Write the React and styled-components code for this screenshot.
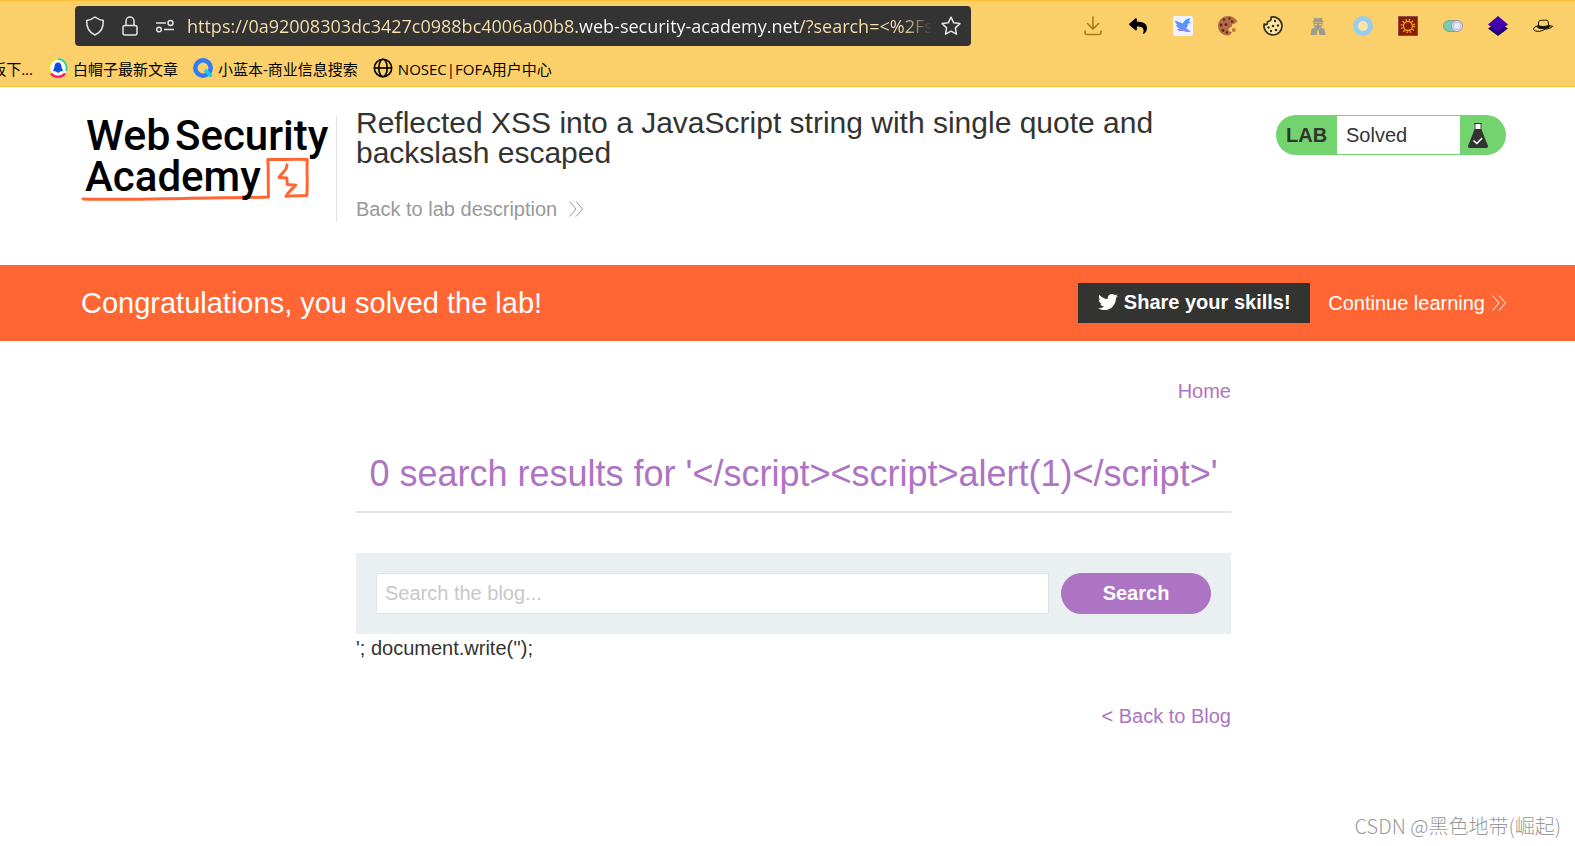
import React, { useState } from 'react';
import styled, { createGlobalStyle } from 'styled-components';
import { FaTwitter, FaReply } from 'react-icons/fa';

const colour = {
  toolbar: '#fbd06a',
  toolbarEdge: '#fdbe33',
  urlBar: '#333333',
  text: '#333332',
  orange: '#ff6633',
  purple: '#ad74c3',
  green: '#72d36f',
  panel: '#eaeff2',
  line: '#e4e4e4',
};

const GlobalStyle = createGlobalStyle`
  * {
    box-sizing: border-box;
  }
  body {
    margin: 0;
    background: #fff;
    color: ${colour.text};
    font-family: "Liberation Sans", Arial, sans-serif;
    font-size: 20px;
  }
  a {
    text-decoration: none;
  }
`;

const Page = styled.div`
  position: relative;
  min-height: 100vh;
  overflow: hidden;
`;

const Browser = styled.div`
  height: 87px;
  background: ${colour.toolbar};
  border-top: 1px solid ${colour.toolbarEdge};
  border-bottom: 1px solid ${colour.toolbarEdge};
  font-family: "Open Sans", "Noto Sans CJK SC", sans-serif;
`;

const Toolbar = styled.div`
  display: flex;
  align-items: center;
  padding: 5px 10px 0 75px;
`;

const UrlBar = styled.div`
  display: flex;
  flex: 1;
  align-items: center;
  gap: 15px;
  height: 40px;
  margin-right: 99px;
  padding: 0 10px;
  background: ${colour.urlBar};
  border-radius: 4px;
  color: #e4e4e4;

  svg {
    flex: none;
  }
`;

/* host name is white, the rest of the address is cream and fades out */
const UrlInput = styled.input`
  flex: 1;
  min-width: 0;
  height: 32px;
  margin: 0 -9px 0 -3px;
  padding: 0;
  border: 0;
  outline: 0;
  font: 18px "Open Sans", sans-serif;
  color: transparent;
  background: linear-gradient(
    90deg,
    #fbe3ae 0 390px,
    #ffffff 390px 612px,
    #fbe3ae 612px 715px,
    transparent 745px
  );
  background-clip: text;
`;

const Extensions = styled.div`
  display: flex;
`;

const ExtensionButton = styled.button`
  display: flex;
  align-items: center;
  justify-content: center;
  width: 45px;
  height: 40px;
  padding: 0;
  border: 0;
  background: none;
  color: #000;
`;

const Bookmarks = styled.nav`
  display: flex;
  gap: 15px;
  height: 44px;
  align-items: center;
`;

const Bookmark = styled.a`
  display: flex;
  align-items: center;
  gap: 5px;
  color: #000;
  font-size: 15px;
  white-space: nowrap;
`;

const CutBookmark = styled(Bookmark)`
  justify-content: flex-end;
  width: 33px;
  overflow: hidden;
`;

const Header = styled.header`
  display: flex;
  align-items: flex-start;
  height: 178px;
  padding: 21px 69px 0 81px;
`;

const Logo = styled.a`
  flex: none;
  width: 256px;
  height: 107px;
  margin-top: 7px;
  border-right: 1px solid ${colour.line};

  svg {
    display: block;
    overflow: visible;
  }
`;

const LabInfo = styled.div`
  flex: 1;
  padding: 0 80px 0 19px;
`;

const LabTitle = styled.h2`
  max-width: 820px;
  margin: 0 0 30px;
  font-size: 30px;
  line-height: 30px;
  font-weight: normal;
`;

const ArrowLink = styled.a`
  display: inline-flex;
  align-items: center;
  gap: ${props => props.$gap || 6}px;
  color: ${props => props.$colour};
  line-height: 20px;
`;

const LabStatus = styled.div`
  display: flex;
  align-items: center;
  flex: none;
  width: 230px;
  height: 40px;
  margin-top: 7px;
  overflow: hidden;
  background: ${colour.green};
  border-radius: 20px;
`;

const LabTag = styled.span`
  width: 61px;
  padding-left: 10px;
  font-weight: bold;
`;

const LabState = styled.span`
  width: 123px;
  padding-left: 9px;
  background: #fff;
  line-height: 38px;
`;

const Banner = styled.section`
  display: flex;
  align-items: center;
  height: 76px;
  padding: 0 68px 0 81px;
  background: ${colour.orange};
  color: #fff;
`;

const BannerTitle = styled.h4`
  flex: 1;
  margin: 0;
  font-size: 29px;
  font-weight: normal;
`;

const ShareButton = styled.button`
  display: flex;
  align-items: center;
  justify-content: center;
  gap: 6px;
  width: 232px;
  height: 40px;
  margin-right: 18px;
  padding: 0 0 2px;
  border: 0;
  background: ${colour.text};
  color: #fff;
  font: bold 20px "Liberation Sans", Arial, sans-serif;
`;

const Wrapper = styled.div`
  padding: 40px 69px 0 81px;
`;

const Blog = styled.main`
  max-width: 875px;
  margin: 0 auto;
`;

const LinkRow = styled.div`
  display: flex;
  justify-content: flex-end;
  line-height: 20px;

  a {
    color: ${colour.purple};
  }
`;

const ResultTitle = styled.h1`
  margin: 40px 0;
  padding: 11px 0 15px;
  border-bottom: 2px solid ${colour.line};
  color: ${colour.purple};
  font-size: 36px;
  line-height: 44px;
  font-weight: normal;
  text-align: center;
`;

const SearchForm = styled.form`
  display: flex;
  gap: 12px;
  padding: 20px;
  background: ${colour.panel};
`;

const SearchInput = styled.input`
  flex: 1;
  min-width: 0;
  height: 41px;
  padding: 0 8px;
  border: 1px solid ${colour.line};
  outline: 0;
  background: #fff;
  font: 20px "Liberation Sans", Arial, sans-serif;

  &::placeholder {
    color: #c8c8c8;
  }
`;

const SearchButton = styled.button`
  width: 150px;
  height: 41px;
  border: 0;
  border-radius: 21px;
  background: ${colour.purple};
  color: #fff;
  font: bold 20px "Liberation Sans", Arial, sans-serif;
`;

const Leftover = styled.p`
  margin: 0 0 44px;
  line-height: 28px;
`;

const Watermark = styled.span`
  position: absolute;
  right: 14px;
  bottom: 6px;
  color: #999;
  font: 300 20px/28px "Noto Sans CJK SC", sans-serif;
`;

const Arrows = () => (
  <svg width="16" height="16" viewBox="0 0 16 16" fill="none" stroke="currentColor" aria-hidden="true">
    <path d="M1.5 .5 8 8l-6.500 7.500M8 .5 14.500 8 8 15.500" />
  </svg>
);

const Shield = () => (
  <svg width="20" height="20" viewBox="0 0 20 20" fill="none" stroke="currentColor" strokeWidth="1.5" strokeLinejoin="round">
    <path d="M10 1C12.500 3 15.500 4 18.300 4.500c.3 7-2.600 12-8.300 14.500C4.300 16.500 1.400 11.500 1.700 4.500 4.500 4 7.500 3 10 1z" />
  </svg>
);

const Lock = () => (
  <svg width="20" height="20" viewBox="0 0 20 20" fill="none" stroke="currentColor" strokeWidth="1.5">
    <rect x="3" y="9.500" width="14" height="9.500" rx="2" />
    <path d="M6 9.500V5a4 4 0 0 1 8 0v4.500" />
  </svg>
);

const Permissions = () => (
  <svg width="20" height="20" viewBox="0 0 20 20" fill="none" stroke="currentColor" strokeWidth="1.500">
    <path d="M1 7h10M9 13.500h10" />
    <circle cx="15.500" cy="7" r="2.500" />
    <circle cx="4" cy="13.500" r="2.300" />
  </svg>
);

const Star = () => (
  <svg width="20" height="20" viewBox="0 0 20 20" fill="none" stroke="currentColor" strokeWidth="1.500" strokeLinejoin="round">
    <path d="M10 1.200l2.700 5.600 6.200.8-4.500 4.300 1.100 6.300L10 15.200l-5.500 3 1.100-6.300L1.100 7.600l6.200-.8z" />
  </svg>
);

const AcademyLogo = () => (
  <svg
    width="255"
    height="92"
    viewBox="0 0 255 92"
    fontFamily="Roboto, sans-serif"
    fontWeight="500"
    fontSize="43"
    role="img"
    aria-label="Web Security Academy"
  >
    <g fill="none" stroke={colour.orange} strokeWidth="3" strokeLinejoin="round" strokeLinecap="round">
      <path d="M2 84c30 1 70 0 100-.5 30-.8 60-.5 85.500-1.500-.6-13 .2-25-.7-37.500 13 .3 26-.5 39.400 0-.6 12 .6 24-.4 36-7 .4-14-.3-20.800.8 2.600-4.500 6-7.300 9.800-11l-8.500-.8-.5-6.500-7.800-.6c2.500-3.500 5-6 7-8.300l1-4.200" />
    </g>
    <text x="5" y="35">Web</text>
    <text x="94" y="35" fontSize="42">Security</text>
    <text x="4" y="76" fontSize="42">Academy</text>
  </svg>
);

const Flask = () => (
  <svg width="36" height="30" viewBox="0 0 36 30" aria-hidden="true">
    <path d="M14.500 4h7v8h-7z" fill="#fff" />
    <path d="M14 3.500h8M15 4v6M21 4v6" stroke={colour.text} strokeWidth="1" fill="none" />
    <path d="M14.700 9h6.600l6.500 16.500c.5 1.500 0 2.500-1.500 2.500H9.700c-1.500 0-2-1-1.500-2.500z" fill={colour.text} />
    <path d="M13.500 20.500l3.300 3 5.400-5.500" fill="none" stroke="#fff" strokeWidth="1.500" />
  </svg>
);

const Download = () => (
  <svg width="20" height="20" viewBox="0 0 20 20" fill="none" stroke="#a97b1c" strokeWidth="1.600" strokeLinecap="round">
    <path d="M10 1v12M4.500 7.500 10 13l5.500-5.500M2 15v1.500a2 2 0 0 0 2 2h12a2 2 0 0 0 2-2V15" />
  </svg>
);

const Bird = () => (
  <svg width="20" height="20" viewBox="0 0 20 20">
    <defs>
      <linearGradient id="bird" x1="0" y1="0" x2="0" y2="1">
        <stop stopColor="#30a0ff" />
        <stop offset="1" stopColor="#8d80ff" />
      </linearGradient>
    </defs>
    <rect width="20" height="20" rx="2" fill="#eef2ff" />
    <path d="M2 4.500l8 3c1.500-3.500 3.500-5 7.500-5.300-1 1-.8 2-1.700 3.500l2 .5-3 1.800c.2 1.500-.5 3-1.500 4.200l4.500 3.500c-3 .8-5 .3-7-1-2.500.5-5 .5-7-1.500l3-.5c-2-1-3.500-2.300-3.800-4l1.700.2C3.200 7.800 2.300 6.500 2 4.500z" fill="url(#bird)" />
  </svg>
);

const BrownCookie = () => (
  <svg width="20" height="20" viewBox="0 0 20 20">
    <path d="M10 0c3.500-.2 7 1.500 9.500 5.500l-3.800 2.800-1.500-.3-.3 2.500-3.500 2.500.5 2 3.300 1.500-3.500 3C4.800 20 0 15.500 0 10S4.500.2 10 0z" fill="#b56b43" />
    <circle cx="15.800" cy="14" r="2" fill="#c57641" />
    <g fill="#5a2c25">
      <circle cx="6" cy="3.500" r="1.300" /><circle cx="11.500" cy="2.500" r="1.200" />
      <circle cx="3" cy="9" r="1.400" /><circle cx="8" cy="8.500" r="1.500" />
      <circle cx="14" cy="5.500" r="1.200" /><circle cx="5" cy="14.500" r="1.400" />
      <circle cx="9" cy="16.500" r="1.200" />
    </g>
  </svg>
);

const OutlineCookie = () => (
  <svg width="20" height="20" viewBox="0 0 20 20">
    <path d="M8 1.200A9 9 0 1 1 1.200 8c1 .8 2.500.7 3.300-.2-.7-1.300.3-2.800 2-2.800C7.800 4.500 8.600 3 8 1.200z" fill="#ffe7a0" stroke="#33301d" strokeWidth="1.700" strokeLinejoin="round" />
    <g fill="#33301d">
      <circle cx="12" cy="5" r="1.200" /><circle cx="15" cy="9.500" r="1.200" />
      <circle cx="10" cy="10" r="1.300" /><circle cx="5.500" cy="11.500" r="1.200" />
      <circle cx="8" cy="15" r="1.200" /><circle cx="13" cy="14" r="1.300" />
    </g>
  </svg>
);

const Spy = () => (
  <svg width="20" height="20" viewBox="0 0 20 20" fill="#9a9a90">
    <path d="M6 1.500l2 .8h4l2-.8.5 3.500 2 1H3.500l2-1zM5 6.500h10l-1 4-2.500 2h-3L6 10.500z" />
    <path d="M9 12h2v2H9zM3.500 13l4-1.500 2 3-1 4.500H2.500zM16.500 13l-4-1.500-2 3 1 4.500h6z" />
    <path d="M6.500 8h2.500v1.200H6.500zM11 8h2.500v1.200H11z" fill={colour.toolbar} />
  </svg>
);

const Ring = () => (
  <svg width="20" height="20" viewBox="0 0 20 20">
    <circle cx="10" cy="10" r="7.500" fill="#fbe3a5" stroke="#98cdf0" strokeWidth="5" />
  </svg>
);

const SunBox = () => (
  <svg width="20" height="20" viewBox="0 0 20 20">
    <rect x=".5" y=".5" width="19" height="19" fill="#8b1a00" stroke="#8a5148" />
    <circle cx="10" cy="10" r="4.500" fill="none" stroke="#eba928" strokeWidth="1.300" />
    <circle cx="10" cy="10" r="6.300" fill="none" stroke="#eba928" strokeWidth="2" strokeDasharray="1.300 2" />
  </svg>
);

const Toggle = () => (
  <svg width="20" height="20" viewBox="0 0 20 20">
    <rect x=".5" y="4.500" width="18" height="11" rx="5.500" fill="#73ceb0" stroke="#8f9c86" />
    <circle cx="14" cy="10" r="5.500" fill="#d9dff3" stroke="#a993b8" />
    <circle cx="14" cy="10" r="3.700" fill="#e6ebfb" stroke="#bdc3df" />
  </svg>
);

const Layers = () => (
  <svg width="20" height="20" viewBox="0 0 20 20">
    <path d="M0 12.500l4-2.500h12l4 2.500L10 20z" fill="#1d0070" />
    <path d="M10 0l10 8.500L10 16 0 8.500z" fill="#4300ad" />
  </svg>
);

const Hat = () => (
  <svg width="20" height="20" viewBox="0 0 20 20" fill="none" stroke="#15120a">
    <path d="M5 11l.8-5.500c.4-1.500 2-1 4-1.200s4.700-.6 5.200.8L16 10.500" />
    <path d="M5 9.500c3.500 1.500 7.500 1.300 11-.3l.3 2c-4 2-8.300 2-11.600.4z" fill="#15120a" />
    <path d="M5 10C1 10.500-.5 13 1.500 14.500c3 1.800 8 .5 10.500-1.300 3-.2 6-1 7.700-2.900l-3.700-.8" />
  </svg>
);

const Ghost = () => (
  <svg width="20" height="20" viewBox="0 0 20 20">
    <circle cx="10" cy="10" r="9" fill="#fff" />
    <g fill="none" strokeWidth="2">
      <path d="M10 1a9 9 0 0 1 8 12" stroke="#2bd6a2" />
      <path d="M3 15.500a9 9 0 0 0 14 0" stroke="#fb1261" />
      <path d="M3 15.500A9 9 0 0 1 10 1" stroke="#fddc2d" />
    </g>
    <path d="M10 4.500c2.500 0 3.500 2 3.500 4.500l1.500 4-3 .5-2 1.500-2-1.500-3-.5 1.500-4c0-2.500 1-4.500 3.500-4.500z" fill="#0b4fe0" />
  </svg>
);

const BlueQ = () => (
  <svg width="20" height="20" viewBox="0 0 20 20" fill="none">
    <circle cx="10" cy="10" r="7.700" stroke="#2f7cf6" strokeWidth="4.500" />
    <path d="M12 12l6.500 6.500" stroke="#12d0f5" strokeWidth="3.500" />
  </svg>
);

const Globe = () => (
  <svg width="20" height="20" viewBox="0 0 20 20" fill="none" stroke="#000" strokeWidth="1.600">
    <circle cx="10" cy="10" r="8.700" />
    <ellipse cx="10" cy="10" rx="4.200" ry="8.700" />
    <path d="M1.500 10h17" />
  </svg>
);

const extensions = [
  { name: 'Downloads', icon: <Download /> },
  { name: 'Back', icon: <FaReply size={18} /> },
  { name: 'Bird', icon: <Bird /> },
  { name: 'Cookie manager', icon: <BrownCookie /> },
  { name: 'Cookie editor', icon: <OutlineCookie /> },
  { name: 'User agent', icon: <Spy /> },
  { name: 'Ring', icon: <Ring /> },
  { name: 'Sun', icon: <SunBox /> },
  { name: 'Toggle', icon: <Toggle /> },
  { name: 'Layers', icon: <Layers /> },
  { name: 'Hat', icon: <Hat /> },
];

const bookmarks = [
  { text: '白帽子最新文章', icon: <Ghost /> },
  { text: '小蓝本-商业信息搜索', icon: <BlueQ /> },
  { text: 'NOSEC|FOFA用户中心', icon: <Globe /> },
];

const App = () => {
  const [url, setUrl] = useState(
    'https://0a92008303dc3427c0988bc4006a00b8.web-security-academy.net/?search=<%2Fsc'
  );
  const [search, setSearch] = useState('');

  return (
    <Page>
      <GlobalStyle />
      <Browser>
        <Toolbar>
          <UrlBar>
            <Shield />
            <Lock />
            <Permissions />
            <UrlInput aria-label="Address" value={url} onChange={e => setUrl(e.target.value)} />
            <Star />
          </UrlBar>
          <Extensions>
            {extensions.map(item => (
              <ExtensionButton key={item.name} type="button" aria-label={item.name}>
                {item.icon}
              </ExtensionButton>
            ))}
          </Extensions>
        </Toolbar>
        <Bookmarks>
          <CutBookmark href="#">板下...</CutBookmark>
          {bookmarks.map(item => (
            <Bookmark key={item.text} href="#">
              {item.icon}
              {item.text}
            </Bookmark>
          ))}
        </Bookmarks>
      </Browser>

      <Header>
        <Logo href="#">
          <AcademyLogo />
        </Logo>
        <LabInfo>
          <LabTitle>Reflected XSS into a JavaScript string with single quote and backslash escaped</LabTitle>
          <ArrowLink href="#" $colour="#999999" $gap={11}>
            Back to lab description
            <Arrows />
          </ArrowLink>
        </LabInfo>
        <LabStatus>
          <LabTag>LAB</LabTag>
          <LabState>Solved</LabState>
          <Flask />
        </LabStatus>
      </Header>

      <Banner>
        <BannerTitle>Congratulations, you solved the lab!</BannerTitle>
        <ShareButton type="button">
          <FaTwitter />
          Share your skills!
        </ShareButton>
        <ArrowLink href="#" $colour="#ffffff">
          Continue learning
          <Arrows />
        </ArrowLink>
      </Banner>

      <Wrapper>
        <Blog>
          <LinkRow>
            <a href="#">Home</a>
          </LinkRow>
          <ResultTitle>{"0 search results for '</script><script>alert(1)</script>'"}</ResultTitle>
          <SearchForm onSubmit={e => e.preventDefault()}>
            <SearchInput
              aria-label="Search the blog"
              placeholder="Search the blog..."
              value={search}
              onChange={e => setSearch(e.target.value)}
            />
            <SearchButton type="submit">Search</SearchButton>
          </SearchForm>
          <Leftover>{"'; document.write('');"}</Leftover>
          <LinkRow>
            <a href="#">&lt; Back to Blog</a>
          </LinkRow>
        </Blog>
      </Wrapper>
      <Watermark>CSDN @黑色地带(崛起)</Watermark>
    </Page>
  );
};

export default App;
